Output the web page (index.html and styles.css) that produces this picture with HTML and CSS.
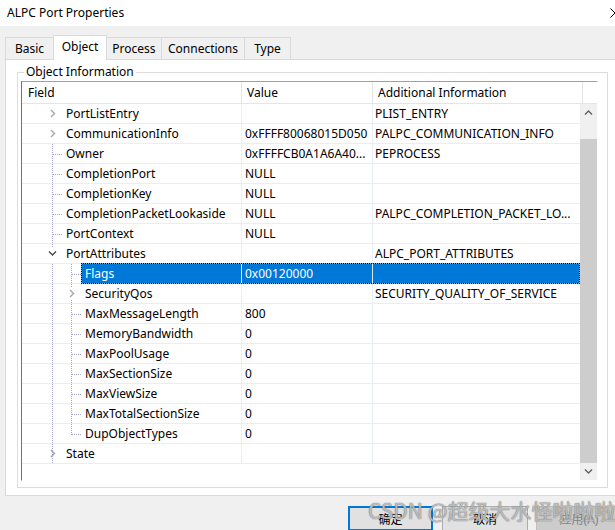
FILE: index.html
```html
<!DOCTYPE html>
<html>
<head>
<meta charset="utf-8">
<title>ALPC Port Properties</title>
<link rel="stylesheet" href="styles.css">
</head>
<body>
<div class="window">
  <div class="titlebar">
    <span class="title">ALPC Port Properties</span>
    <svg class="close" width="10" height="10" viewBox="0 0 10 10"><path d="M0.5 0.5 L9.5 9.5 M9.5 0.5 L0.5 9.5" stroke="#000" stroke-width="1"/></svg>
  </div>

  <div class="tabs">
    <div class="tab t-basic">Basic</div>
    <div class="tab active t-object">Object</div>
    <div class="tab t-process">Process</div>
    <div class="tab t-conn">Connections</div>
    <div class="tab t-type">Type</div>
  </div>

  <div class="panel">
    <fieldset class="group">
      <legend>Object Information</legend>
      <div class="listview">
        <div class="lv-header">
          <div class="hc h-name">Field</div>
          <div class="hc h-val">Value</div>
          <div class="hc h-info">Additional Information</div>
          <div class="hc h-fill"></div>
        </div>
        <div class="lv-body">
          <div class="rows">

            <div class="row l0">
              <span class="slot"><svg width="19" height="19"><path d="M8 6 L11.5 9.5 L8 13" class="arr-c"/></svg></span>
              <div class="main"><span class="name">PortListEntry</span><span class="val"></span><span class="info">PLIST_ENTRY</span></div>
            </div>
            <div class="row l0">
              <span class="slot"><svg width="19" height="19"><path d="M8 6 L11.5 9.5 L8 13" class="arr-c"/></svg></span>
              <div class="main"><span class="name">CommunicationInfo</span><span class="val">0xFFFF80068015D050</span><span class="info">PALPC_COMMUNICATION_INFO</span></div>
            </div>
            <div class="row l0">
              <span class="slot vh"></span>
              <div class="main"><span class="name">Owner</span><span class="val">0xFFFFCB0A1A6A40...</span><span class="info">PEPROCESS</span></div>
            </div>
            <div class="row l0">
              <span class="slot vh"></span>
              <div class="main"><span class="name">CompletionPort</span><span class="val">NULL</span><span class="info"></span></div>
            </div>
            <div class="row l0">
              <span class="slot vh"></span>
              <div class="main"><span class="name">CompletionKey</span><span class="val">NULL</span><span class="info"></span></div>
            </div>
            <div class="row l0">
              <span class="slot vh"></span>
              <div class="main"><span class="name">CompletionPacketLookaside</span><span class="val">NULL</span><span class="info">PALPC_COMPLETION_PACKET_LO...</span></div>
            </div>
            <div class="row l0">
              <span class="slot vh"></span>
              <div class="main"><span class="name">PortContext</span><span class="val">NULL</span><span class="info"></span></div>
            </div>
            <div class="row l0">
              <span class="slot v"><svg width="19" height="19"><rect x="4" y="4" width="11" height="15" fill="#fff"/><path d="M6 7.5 L9.5 11 L13 7.5" class="arr-e"/></svg></span>
              <div class="main"><span class="name">PortAttributes</span><span class="val"></span><span class="info">ALPC_PORT_ATTRIBUTES</span></div>
            </div>
            <div class="row l1">
              <span class="slot v"></span><span class="slot vh"></span>
              <div class="main sel"><span class="name">Flags</span><span class="val">0x00120000</span><span class="info"></span></div>
            </div>
            <div class="row l1">
              <span class="slot v"></span>
              <span class="slot v"><svg width="19" height="19"><rect x="5" y="4" width="9" height="12" fill="#fff"/><path d="M8 6 L11.5 9.5 L8 13" class="arr-c"/></svg></span>
              <div class="main"><span class="name">SecurityQos</span><span class="val"></span><span class="info">SECURITY_QUALITY_OF_SERVICE</span></div>
            </div>
            <div class="row l1">
              <span class="slot v"></span><span class="slot vh"></span>
              <div class="main"><span class="name">MaxMessageLength</span><span class="val">800</span><span class="info"></span></div>
            </div>
            <div class="row l1">
              <span class="slot v"></span><span class="slot vh"></span>
              <div class="main"><span class="name">MemoryBandwidth</span><span class="val">0</span><span class="info"></span></div>
            </div>
            <div class="row l1">
              <span class="slot v"></span><span class="slot vh"></span>
              <div class="main"><span class="name">MaxPoolUsage</span><span class="val">0</span><span class="info"></span></div>
            </div>
            <div class="row l1">
              <span class="slot v"></span><span class="slot vh"></span>
              <div class="main"><span class="name">MaxSectionSize</span><span class="val">0</span><span class="info"></span></div>
            </div>
            <div class="row l1">
              <span class="slot v"></span><span class="slot vh"></span>
              <div class="main"><span class="name">MaxViewSize</span><span class="val">0</span><span class="info"></span></div>
            </div>
            <div class="row l1">
              <span class="slot v"></span><span class="slot vh"></span>
              <div class="main"><span class="name">MaxTotalSectionSize</span><span class="val">0</span><span class="info"></span></div>
            </div>
            <div class="row l1">
              <span class="slot v"></span><span class="slot vth"></span>
              <div class="main"><span class="name">DupObjectTypes</span><span class="val">0</span><span class="info"></span></div>
            </div>
            <div class="row l0">
              <span class="slot v"><svg width="19" height="19"><path d="M8 6 L11.5 9.5 L8 13" class="arr-c"/></svg></span>
              <div class="main"><span class="name">State</span><span class="val"></span><span class="info"></span></div>
            </div>

          </div>
          <div class="vscroll">
            <div class="sb-btn"><svg width="17" height="17"><path d="M5 10.5 L8.5 7 L12 10.5" class="sb-arr"/></svg></div>
            <div class="sb-track"><div class="sb-thumb"></div></div>
            <div class="sb-btn"><svg width="17" height="17"><path d="M5 6.5 L8.5 10 L12 6.5" class="sb-arr"/></svg></div>
          </div>
        </div>
      </div>
    </fieldset>
  </div>

  <div class="buttons">
    <button class="btn ok">确定</button>
    <button class="btn cancel">取消</button>
    <button class="btn disabled">应用(A)</button>
  </div>

  <div class="watermark">CSDN @超级大水怪啦啦啦</div>
</div>
</body>
</html>
```

FILE: styles.css
```css
* { box-sizing: border-box; }
html, body { margin: 0; padding: 0; }
body {
  width: 615px;
  height: 530px;
  overflow: hidden;
  background: #f0f0f0;
  font-family: "Noto Sans", "Noto Sans CJK SC", sans-serif;
  font-size: 12px;
  color: #000;
}
.window {
  position: relative;
  width: 615px;
  height: 530px;
  overflow: hidden;
}

/* title bar */
.titlebar {
  height: 26px;
  background: #fff;
  display: flex;
  align-items: center;
  padding-left: 7px;
  overflow: hidden;
}
.title { flex: 1; line-height: 16px; }
.close { flex: none; margin-right: -5px; }

/* tabs */
.tabs {
  display: flex;
  align-items: flex-end;
  height: 33px;
  padding-left: 5px;
  position: relative;
  z-index: 1;
}
.tab {
  height: 22px;
  border: 1px solid #d9d9d9;
  border-left: none;
  border-bottom: none;
  background: #f0f0f0;
  display: flex;
  align-items: center;
  justify-content: center;
  line-height: 16px;
}
.tab:first-child { border-left: 1px solid #d9d9d9; }
.tab.active {
  height: 25px;
  margin-bottom: -1px;
  margin-left: -1px;
  border-left: 1px solid #d9d9d9;
  background: #fff;
  align-items: flex-start;
  padding-top: 3px;
}
.t-basic { width: 49px; }
.t-object { width: 54px; }
.t-process { width: 55px; }
.t-conn { width: 83px; }
.t-type { width: 46px; }

/* panel */
.panel {
  margin-left: 5px;
  width: 620px;
  height: 437px;
  border: 1px solid #d9d9d9;
  background: #fff;
  padding: 0 0 0 11px;
}
.group {
  margin: 5px 0 0 0;
  width: 591px;
  border: 1px solid #dcdcdc;
  padding: 2px 9px 6px 3px;
  min-width: 0;
}
.group legend {
  margin-left: 3px;
  padding: 0 2px;
  line-height: 14px;
}

/* list view */
.listview {
  width: 577px;
  height: 400px;
  border-top: 1px solid #a0a0a0;
  border-left: 1px solid #707070;
  border-right: 1px solid #fff;
  border-bottom: 1px solid #fff;
  background: #fff;
  display: flex;
  flex-direction: column;
}
.lv-header {
  flex: none;
  display: flex;
  height: 22px;
  border-bottom: 1px solid #e5e5e5;
}
.hc {
  border-right: 1px solid #e5e5e5;
  padding-left: 5px;
  line-height: 21px;
  white-space: nowrap;
}
.h-name { width: 220px; padding-left: 6px; }
.h-val { width: 131px; }
.h-info { width: 210px; }
.h-fill { flex: 1; border-right: none; }

.lv-body { flex: 1; display: flex; min-height: 0; }
.rows { flex: 1; min-width: 0; }

.row {
  display: flex;
  height: 20px;
  border-bottom: 1px solid #e8eef6;
  padding-left: 21px;
}
.slot { width: 19px; flex: none; display: block; }
.slot svg { display: block; }
.arr-c { fill: none; stroke: #a6a6a6; stroke-width: 1.4; }
.arr-e { fill: none; stroke: #454545; stroke-width: 1.3; }

.v {
  background: repeating-linear-gradient(to bottom, #a3a6d4 0 1px, transparent 1px 2px) 9px 0 / 1px 100% no-repeat;
}
.vh {
  background:
    repeating-linear-gradient(to right, #a0a2c4 0 1px, transparent 1px 2px) 10px 10px / 9px 1px no-repeat,
    repeating-linear-gradient(to bottom, #a3a6d4 0 1px, transparent 1px 2px) 9px 0 / 1px 100% no-repeat;
}
.vth {
  background:
    repeating-linear-gradient(to right, #a0a2c4 0 1px, transparent 1px 2px) 10px 10px / 9px 1px no-repeat,
    repeating-linear-gradient(to bottom, #a3a6d4 0 1px, transparent 1px 2px) 9px 0 / 1px 11px no-repeat;
}

.main {
  flex: 1;
  min-width: 0;
  display: flex;
  border-left: 1px solid transparent;
}
.name, .val, .info {
  white-space: nowrap;
  overflow: hidden;
  line-height: 19px;
}
.name {
  flex: none;
  width: 179px;
  padding-left: 3px;
  border-right: 1px solid #e8eef6;
}
.l1 .name { width: 160px; }
.val {
  flex: none;
  width: 131px;
  padding-left: 3px;
  border-right: 1px solid #e8eef6;
}
.info { flex: 1; min-width: 0; padding-left: 2px; }

.main.sel {
  margin: -1px 0;
  border: 1px dotted #000;
  background: linear-gradient(#0078d7, #0078d7) padding-box, #e89a3c border-box;
  color: #fff;
}
.main.sel .name, .main.sel .val { border-right-color: #dbe9f6; }

/* scrollbar */
.vscroll {
  width: 17px;
  flex: none;
  display: flex;
  flex-direction: column;
  background: #f0f0f0;
}
.sb-btn { height: 17px; flex: none; }
.sb-btn svg { display: block; }
.sb-arr { fill: none; stroke: #606060; stroke-width: 1.4; }
.sb-track { flex: 1; padding-top: 18px; display: flex; flex-direction: column; }
.sb-thumb { flex: 1; background: #cdcdcd; }

/* buttons */
.buttons {
  display: flex;
  padding-left: 348px;
  margin-top: 10px;
}
.btn {
  flex: none;
  height: 25px;
  padding: 0;
  font: inherit;
  font-size: 12px;
  background: #e1e1e1;
  border: 1px solid #adadad;
  color: #000;
}
.btn.ok { width: 85px; border: 2px solid #0078d7; }
.btn.cancel { width: 86px; margin-left: 9px; }
.btn.disabled { width: 86px; margin-left: 8px; background: #cccccc; border-color: #bfbfbf; color: #838383; }

/* watermark overlay */
.watermark {
  position: absolute;
  left: 368px;
  top: 497px;
  font-family: "Noto Sans CJK SC", sans-serif;
  font-size: 21px;
  line-height: 26px;
  white-space: nowrap;
  color: rgba(250, 250, 250, 0.6);
  text-shadow: 0 0 1px rgba(90, 90, 90, 1), 0 0 1px rgba(90, 90, 90, 0.5);
  pointer-events: none;
}
```
